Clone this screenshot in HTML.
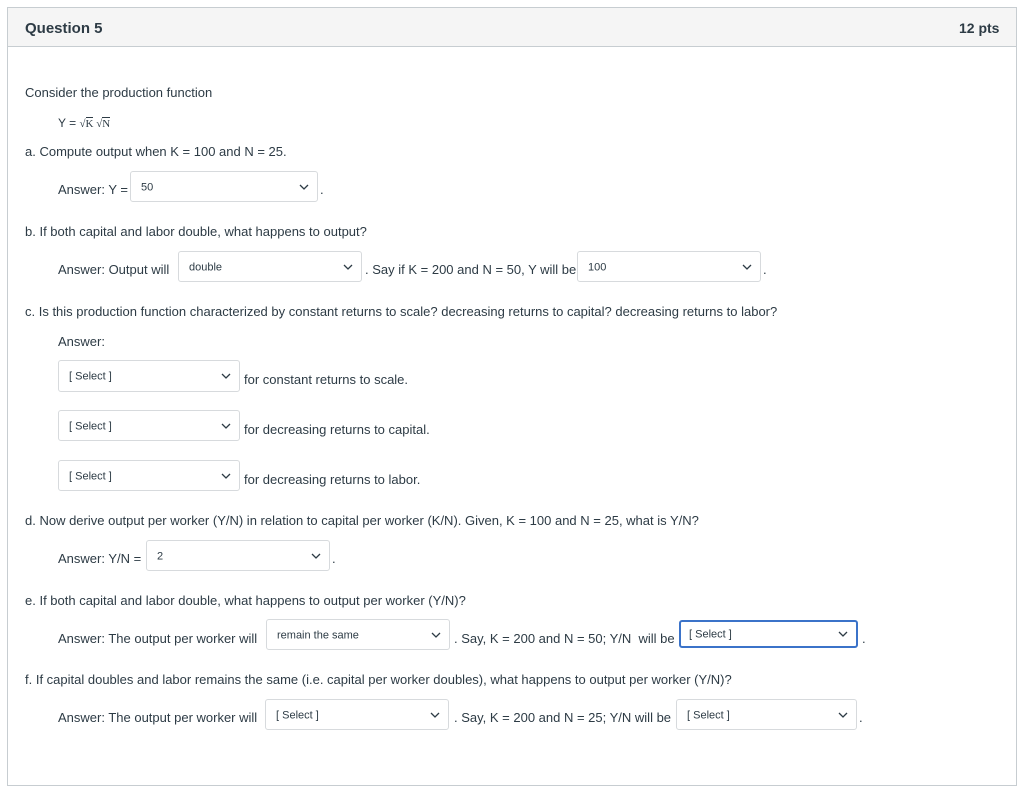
<!DOCTYPE html>
<html><head><meta charset="utf-8"><style>
body{margin:0;background:#fff;font-family:"Liberation Sans",sans-serif;color:#2d3b45;width:1024px;height:788px;position:relative;overflow:hidden}
.box{position:absolute;left:7px;top:7px;width:1008px;height:777px;border:1px solid #c7cdd1}
.hdr{position:absolute;left:8px;top:8px;width:1008px;height:38px;background:#f5f5f5;border-bottom:1px solid #c7cdd1}
.t{position:absolute;font-size:13px;white-space:nowrap;line-height:16px;margin-top:2px}
.s{position:absolute;border:1px solid #d7dadd;border-radius:3px;background:#fff;box-sizing:border-box}
.s span{position:absolute;left:10px;top:50%;transform:translateY(-45%);font-size:11px;color:#2d3b45}
.s svg{position:absolute;right:8px;top:50%;margin-top:-3px}
</style></head><body>
<div class="box"></div><div class="hdr"></div>
<div class="t" style="left:25px;top:19px;font-size:15px;font-weight:bold">Question 5</div>
<div class="t" style="left:959px;top:18px;font-size:14px;font-weight:bold">12 pts</div>

<div class="t" style="left:25px;top:83px">Consider the production function</div>
<div class="t" style="left:58px;top:113px;font-size:12px">Y = <span style="font-family:'Liberation Serif',serif;font-size:11px">√<span style="border-top:1px solid #2d3b45">K</span> √<span style="border-top:1px solid #2d3b45">N</span></span></div>
<div class="t" style="left:25px;top:142px">a. Compute output when K = 100 and N = 25.</div>
<div class="t" style="left:58px;top:180px">Answer: Y =</div>
<div class="s" style="left:130px;top:171px;width:188px;height:31px"><span>50</span><svg width="10" height="7" viewBox="0 0 10 7"><path d="M1 1L5 5L9 1" fill="none" stroke="#2d3b45" stroke-width="1.3"/></svg></div>
<div class="t" style="left:320px;top:180px">.</div>

<div class="t" style="left:25px;top:222px">b. If both capital and labor double, what happens to output?</div>
<div class="t" style="left:58px;top:260px">Answer: Output will</div>
<div class="s" style="left:178px;top:251px;width:184px;height:31px"><span>double</span><svg width="10" height="7" viewBox="0 0 10 7"><path d="M1 1L5 5L9 1" fill="none" stroke="#2d3b45" stroke-width="1.3"/></svg></div>
<div class="t" style="left:365px;top:260px">. Say if K = 200 and N = 50, Y will be</div>
<div class="s" style="left:577px;top:251px;width:184px;height:31px"><span>100</span><svg width="10" height="7" viewBox="0 0 10 7"><path d="M1 1L5 5L9 1" fill="none" stroke="#2d3b45" stroke-width="1.3"/></svg></div>
<div class="t" style="left:763px;top:260px">.</div>

<div class="t" style="left:25px;top:302px">c. Is this production function characterized by constant returns to scale? decreasing returns to capital? decreasing returns to labor?</div>
<div class="t" style="left:58px;top:332px">Answer:</div>
<div class="s" style="left:58px;top:360px;width:182px;height:32px"><span>[ Select ]</span><svg width="10" height="7" viewBox="0 0 10 7"><path d="M1 1L5 5L9 1" fill="none" stroke="#2d3b45" stroke-width="1.3"/></svg></div>
<div class="t" style="left:244px;top:370px">for constant returns to scale.</div>
<div class="s" style="left:58px;top:410px;width:182px;height:31px"><span>[ Select ]</span><svg width="10" height="7" viewBox="0 0 10 7"><path d="M1 1L5 5L9 1" fill="none" stroke="#2d3b45" stroke-width="1.3"/></svg></div>
<div class="t" style="left:244px;top:420px">for decreasing returns to capital.</div>
<div class="s" style="left:58px;top:460px;width:182px;height:31px"><span>[ Select ]</span><svg width="10" height="7" viewBox="0 0 10 7"><path d="M1 1L5 5L9 1" fill="none" stroke="#2d3b45" stroke-width="1.3"/></svg></div>
<div class="t" style="left:244px;top:470px">for decreasing returns to labor.</div>

<div class="t" style="left:25px;top:511px">d. Now derive output per worker (Y/N) in relation to capital per worker (K/N). Given, K = 100 and N = 25, what is Y/N?</div>
<div class="t" style="left:58px;top:549px">Answer: Y/N =</div>
<div class="s" style="left:146px;top:540px;width:184px;height:31px"><span>2</span><svg width="10" height="7" viewBox="0 0 10 7"><path d="M1 1L5 5L9 1" fill="none" stroke="#2d3b45" stroke-width="1.3"/></svg></div>
<div class="t" style="left:332px;top:549px">.</div>

<div class="t" style="left:25px;top:591px">e. If both capital and labor double, what happens to output per worker (Y/N)?</div>
<div class="t" style="left:58px;top:629px">Answer: The output per worker will</div>
<div class="s" style="left:266px;top:619px;width:184px;height:31px"><span>remain the same</span><svg width="10" height="7" viewBox="0 0 10 7"><path d="M1 1L5 5L9 1" fill="none" stroke="#2d3b45" stroke-width="1.3"/></svg></div>
<div class="t" style="left:454px;top:629px">. Say, K = 200 and N = 50; Y/N &nbsp;will be</div>
<div class="s" style="left:679px;top:620px;width:179px;height:28px;border:2px solid #3b73c9"><span style="left:8px">[ Select ]</span><svg width="10" height="7" viewBox="0 0 10 7"><path d="M1 1L5 5L9 1" fill="none" stroke="#2d3b45" stroke-width="1.3"/></svg></div>
<div class="t" style="left:862px;top:629px">.</div>

<div class="t" style="left:25px;top:670px">f. If capital doubles and labor remains the same (i.e. capital per worker doubles), what happens to output per worker (Y/N)?</div>
<div class="t" style="left:58px;top:708px">Answer: The output per worker will</div>
<div class="s" style="left:265px;top:699px;width:184px;height:31px"><span>[ Select ]</span><svg width="10" height="7" viewBox="0 0 10 7"><path d="M1 1L5 5L9 1" fill="none" stroke="#2d3b45" stroke-width="1.3"/></svg></div>
<div class="t" style="left:454px;top:708px">. Say, K = 200 and N = 25; Y/N will be</div>
<div class="s" style="left:676px;top:699px;width:181px;height:31px"><span>[ Select ]</span><svg width="10" height="7" viewBox="0 0 10 7"><path d="M1 1L5 5L9 1" fill="none" stroke="#2d3b45" stroke-width="1.3"/></svg></div>
<div class="t" style="left:859px;top:708px">.</div>
</body></html>
